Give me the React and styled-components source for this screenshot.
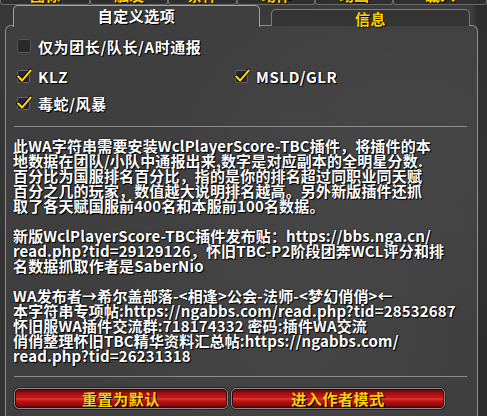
import React from "react";
import styled, { createGlobalStyle } from "styled-components";

const GlobalStyle = createGlobalStyle`
  html, body {
    margin: 0;
    padding: 0;
    background: #2f2f2f;
  }
  * {
    box-sizing: border-box;
  }
`;

const FONT = `"Noto Sans CJK SC", "Noto Sans", "Liberation Sans", sans-serif`;

const Frame = styled.div`
  position: relative;
  width: 487px;
  height: 416px;
  overflow: hidden;
  font-family: ${FONT};
  font-weight: 700;
  background:
    radial-gradient(ellipse at 78% 40%, rgba(255, 255, 255, 0.05), transparent 55%),
    radial-gradient(ellipse at 20% 80%, rgba(0, 0, 0, 0.12), transparent 60%),
    linear-gradient(90deg, #383838 0%, #3b3b3b 97%, #2c2c2c 98%, #2c2c2c 100%);
`;

const TopTabs = styled.div`
  display: flex;
  height: 5px;
  overflow: hidden;
`;

const TopTab = styled.div`
  flex: none;
  width: ${(p) => p.$w}px;
  height: 5px;
  display: flex;
  align-items: flex-end;
  justify-content: center;
  border: 1px solid #6b6b6b;
  border-top: none;
  border-radius: 0 0 3px 3px;
  background: #2f2f2f;
  color: #ffd100;
  font-size: 15px;
  line-height: 15px;
  text-shadow: 1px 1px 0 #000;
  white-space: nowrap;
  overflow: hidden;

  span {
    display: block;
    padding-bottom: 2px;
  }
`;

const SubTabs = styled.div`
  display: flex;
  align-items: flex-end;
  height: 21px;
  padding-left: 13px;
  position: relative;
  z-index: 2;
`;

const SubTab = styled.div`
  flex: none;
  width: ${(p) => p.$w}px;
  height: ${(p) => (p.$active ? 22 : 17)}px;
  margin-left: ${(p) => p.$gap || 0}px;
  margin-bottom: ${(p) => (p.$active ? -1 : 0)}px;
  display: flex;
  align-items: center;
  justify-content: center;
  border: 1px solid ${(p) => (p.$active ? "#a2a2a2" : "#7c7c7c")};
  border-bottom: none;
  border-radius: 5px 5px 0 0;
  background: ${(p) => (p.$active ? "#3f3f3f" : "#353535")};
  color: ${(p) => (p.$active ? "#ffffff" : "#ffd100")};
  font-size: 15px;
  line-height: 15px;
  letter-spacing: 0.5px;
  text-shadow: 1px 1px 0 #000;
  padding-bottom: ${(p) => (p.$active ? 2 : 0)}px;
`;

const Panel = styled.div`
  margin-left: 5px;
  margin-top: -1px;
  width: 473px;
  height: 395px;
  border: 1px solid #8f8f8f;
  border-bottom: none;
  border-radius: 6px 6px 0 0;
  background:
    radial-gradient(ellipse at 85% 30%, rgba(255, 255, 255, 0.035), transparent 50%),
    radial-gradient(ellipse at 60% 75%, rgba(255, 255, 255, 0.03), transparent 55%),
    #3f3f3f;
  padding: 9px 0 0 7px;
  position: relative;
  z-index: 1;
`;

const OptionRow = styled.div`
  display: flex;
  align-items: center;
  height: 22px;
  padding-left: ${(p) => (p.$checked ? 3 : 4)}px;
`;

const OptionGrid = styled.div`
  display: grid;
  grid-template-columns: 218px 1fr;
  row-gap: 5px;
  margin-top: 8px;
`;

const Label = styled.span`
  margin-left: ${(p) => (p.$checked ? 6 : 7)}px;
  color: #ffffff;
  font-size: 15px;
  line-height: 15px;
  letter-spacing: 0.6px;
  text-shadow: 1px 1px 0 #000, 0 0 2px #000;
  white-space: nowrap;
`;

const Divider = styled.div`
  margin-top: ${(p) => p.$top}px;
  margin-left: 1px;
  width: 453px;
  height: 1px;
  background: #9b9b9b;
  opacity: 0.85;
`;

const Body = styled.div`
  margin-top: 11px;
  color: #ffffff;
  font-size: 15px;
  line-height: 15px;
  letter-spacing: 0.15px;
  text-shadow: 1px 1px 0 #000, 0 0 2px #000;
`;

const Line = styled.div`
  height: 15px;
  white-space: nowrap;
`;

const Buttons = styled.div`
  display: flex;
  gap: 3px;
  margin-top: 11px;
  padding-left: 1px;
`;

const RedButton = styled.button`
  width: 214px;
  height: 21px;
  padding: 0;
  border: 1px solid #8a8a8a;
  border-radius: 5px;
  box-shadow: inset 0 0 0 1px #3a0505, 0 0 0 1px #262626;
  background: linear-gradient(
    180deg,
    #4a0606 0%,
    #9c0e0e 20%,
    #c81818 45%,
    #e2393a 52%,
    #bf1515 62%,
    #8e0c0c 85%,
    #4a0606 100%
  );
  color: #ffd100;
  font-family: ${FONT};
  font-weight: 700;
  font-size: 15px;
  line-height: 15px;
  letter-spacing: 0.6px;
  text-shadow: 1px 1px 0 #000;
`;

const CheckBox = ({ checked }) =>
  checked ? (
    <svg width="16" height="16" viewBox="0 0 16 16">
      <rect x="1.5" y="2.5" width="12" height="12" rx="1.5" fill="#22263a" stroke="#666" />
      <path d="M2.3 8.6 L6 12.6 L14.6 2.6" fill="none" stroke="#000" strokeWidth="4" strokeLinecap="round" strokeLinejoin="round" opacity="0.8" />
      <path d="M2.3 8.6 L6 12.6 L14.6 2.6" fill="none" stroke="#ffd60a" strokeWidth="2.2" strokeLinecap="round" strokeLinejoin="round" />
    </svg>
  ) : (
    <svg width="14" height="14" viewBox="0 0 14 14">
      <rect x="0.5" y="0.5" width="13" height="13" rx="2" fill="#2a2a2a" stroke="#575757" />
    </svg>
  );

const Option = ({ checked, label }) => (
  <OptionRow $checked={checked}>
    <CheckBox checked={checked} />
    <Label $checked={checked}>{label}</Label>
  </OptionRow>
);

const topTabs = [
  { w: 90, t: "图标" },
  { w: 78, t: "触发" },
  { w: 69, t: "条件" },
  { w: 78, t: "动作" },
  { w: 78, t: "动画" },
  { w: 94, t: "载入" },
];

const lines = [
  "此WA字符串需要安装WclPlayerScore-TBC插件，将插件的本",
  "地数据在团队/小队中通报出来,数字是对应副本的全明星分数.",
  "百分比为国服排名百分比，指的是你的排名超过同职业同天赋",
  "百分之几的玩家，数值越大说明排名越高。另外新版插件还抓",
  "取了各天赋国服前400名和本服前100名数据。",
  "",
  "新版WclPlayerScore-TBC插件发布贴：https://bbs.nga.cn/",
  "read.php?tid=29129126，怀旧TBC-P2阶段团奔WCL评分和排",
  "名数据抓取作者是SaberNio",
  "",
  "WA发布者→希尔盖部落-<相逢>公会-法师-<梦幻俏俏>←",
  "本字符串专项帖:https://ngabbs.com/read.php?tid=28532687",
  "怀旧服WA插件交流群:718174332 密码:插件WA交流",
  "俏俏整理怀旧TBC精华资料汇总帖:https://ngabbs.com/",
  "read.php?tid=26231318",
];

export default function App() {
  return (
    <Frame>
      <GlobalStyle />
      <TopTabs>
        {topTabs.map((tab) => (
          <TopTab key={tab.t} $w={tab.w}>
            <span>{tab.t}</span>
          </TopTab>
        ))}
      </TopTabs>
      <SubTabs>
        <SubTab $w={247} $active>
          自定义选项
        </SubTab>
        <SubTab $w={199} $gap={11}>
          信息
        </SubTab>
      </SubTabs>
      <Panel>
        <Option label="仅为团长/队长/A时通报" />
        <OptionGrid>
          <Option checked label="KLZ" />
          <Option checked label="MSLD/GLR" />
          <Option checked label="毒蛇/风暴" />
        </OptionGrid>
        <Divider $top={12} />
        <Body>
          {lines.map((text, i) => (
            <Line key={i}>{text}</Line>
          ))}
        </Body>
        <Divider $top={13} />
        <Buttons>
          <RedButton>重置为默认</RedButton>
          <RedButton>进入作者模式</RedButton>
        </Buttons>
      </Panel>
    </Frame>
  );
}
